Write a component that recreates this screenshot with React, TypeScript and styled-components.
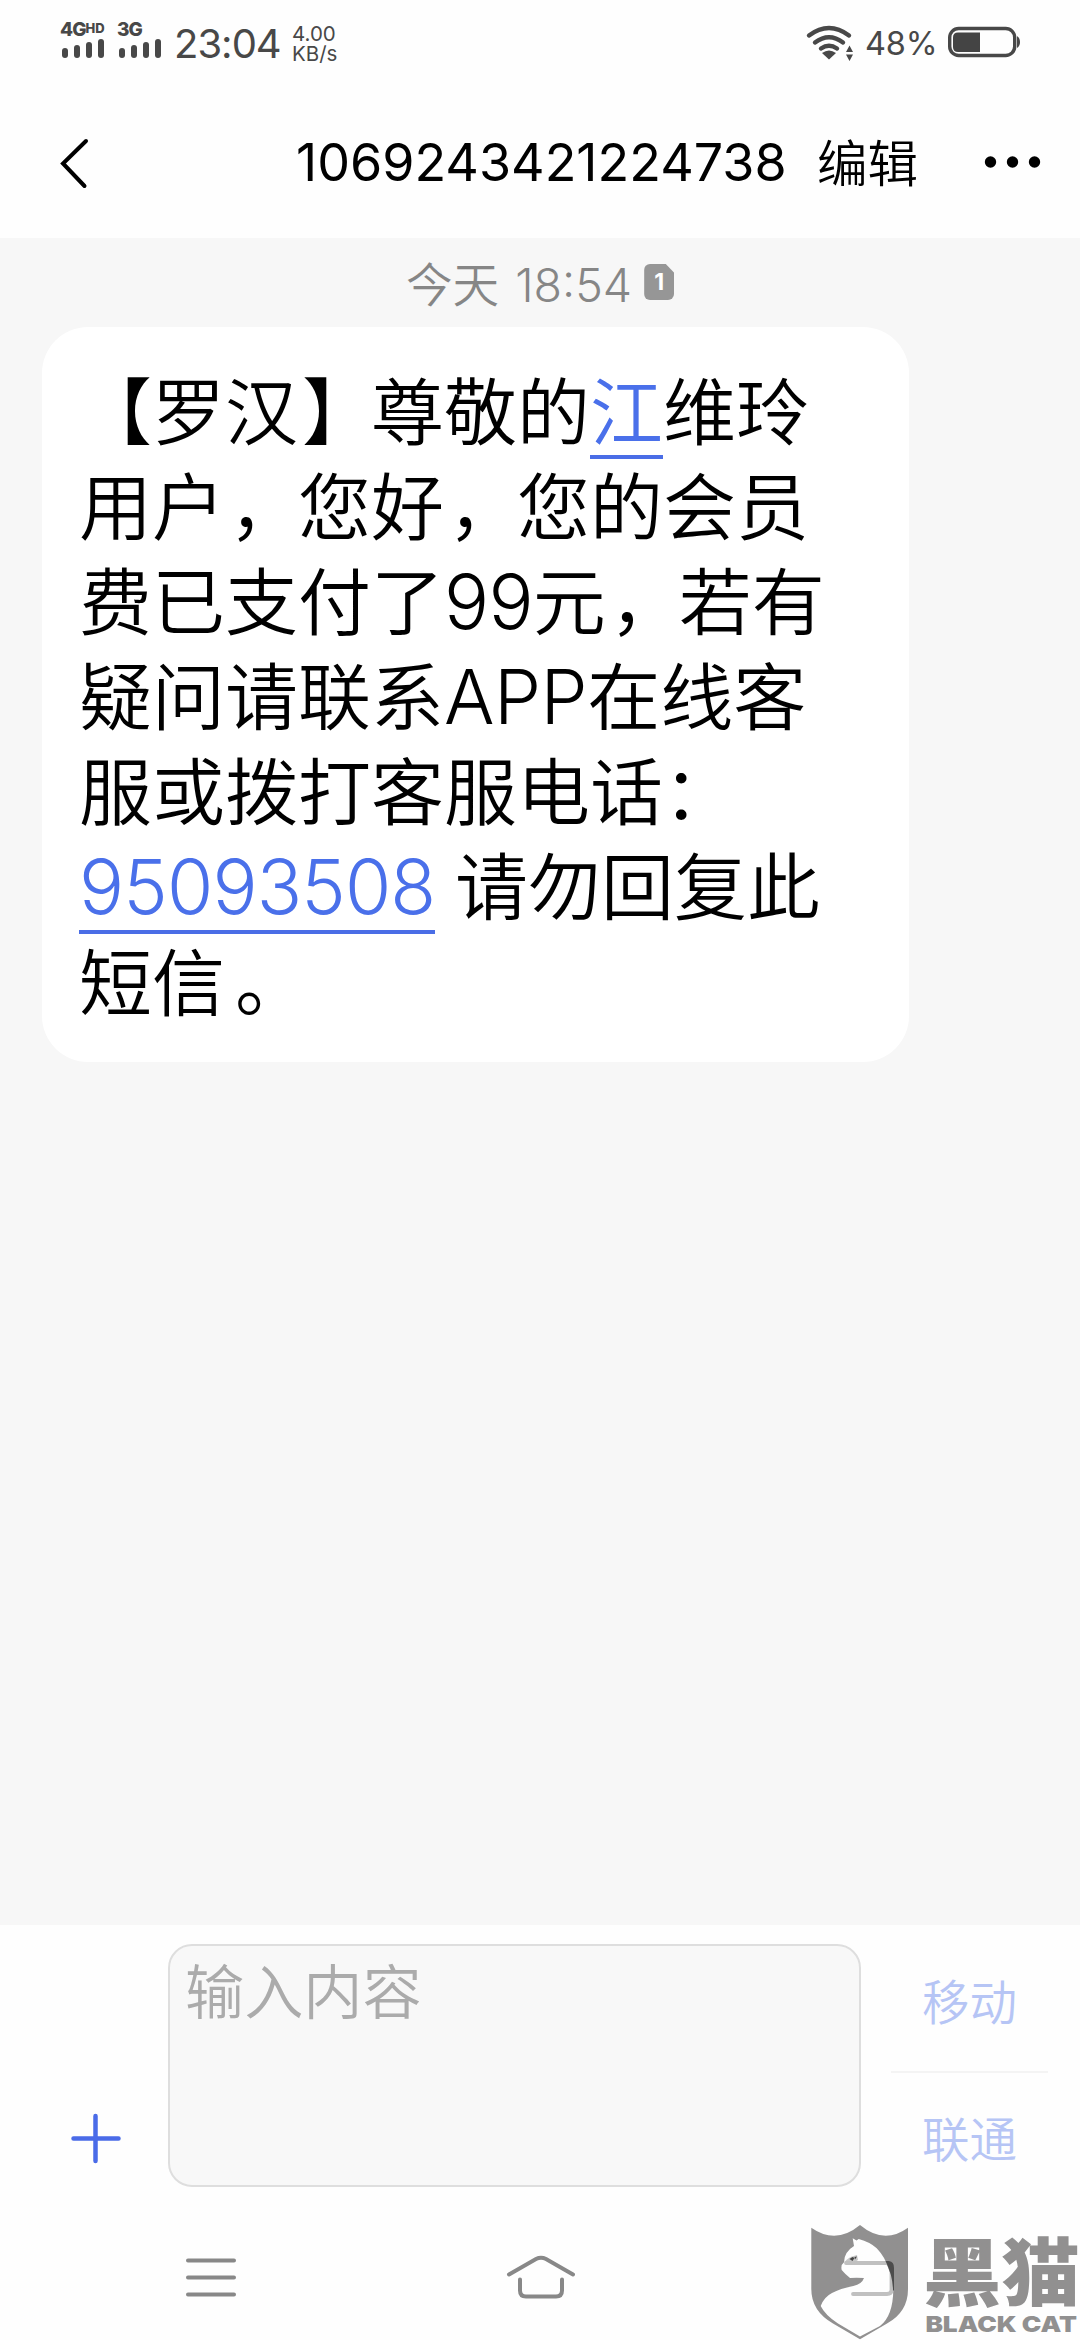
import React from "react";
import styled, { createGlobalStyle } from "styled-components";

const Global = createGlobalStyle`
  html, body { margin: 0; padding: 0; background: #fefefe; }
  * { box-sizing: border-box; }
`;

const Screen = styled.div`
  position: relative;
  width: 1080px;
  height: 2340px;
  overflow: hidden;
  display: flex;
  flex-direction: column;
  background: #fefefe;
  font-family: Inter, "Noto Sans CJK SC", sans-serif;
`;

const StatusBar = styled.div`
  height: 88px;
  flex: none;
  display: flex;
  justify-content: space-between;
  padding: 0 60px;
  color: #484848;
`;

const StatusGroup = styled.div`
  display: flex;
  align-items: center;
  height: 88px;
`;

const Signal = styled.div<{ $width: number }>`
  width: ${(p) => p.$width}px;
  height: 38px;
  margin-top: -10px;
  display: flex;
  flex-direction: column;
`;

const Network = styled.div`
  height: 19px;
  display: flex;
  font: 800 19px/20px Inter, sans-serif;
  letter-spacing: -0.9px;
`;

const Hd = styled.span`
  font-size: 13px;
  line-height: 16px;
  letter-spacing: 0;
`;

const Bars = styled.div`
  display: flex;
  align-items: flex-end;
  gap: 6px;
  height: 19px;
  padding-left: 2px;
`;

const Bar = styled.i<{ $h: number }>`
  width: 6px;
  height: ${(p) => p.$h}px;
  border-radius: 3px;
  background: #484848;
`;

const Clock = styled.div`
  width: 118px;
  font-size: 40px;
  line-height: 40px;
  letter-spacing: -1px;
`;

const Rate = styled.div`
  display: flex;
  flex-direction: column;
  font-size: 20.5px;
  line-height: 20px;
  margin-top: -1px;
`;

const Percent = styled.div`
  width: 83px;
  font-size: 32.5px;
  line-height: 40px;
  letter-spacing: -0.2px;
`;

const Header = styled.header`
  height: 150px;
  flex: none;
  display: flex;
  align-items: center;
  padding: 0 0 0 58px;
  color: #000;
`;

const Icon = styled.svg`
  display: block;
  flex: none;
  overflow: visible;
`;

const Title = styled.h1`
  margin: 0 0 0 204px;
  width: 521px;
  font-size: 52px;
  line-height: 60px;
  font-weight: 400;
  white-space: nowrap;
`;

const Edit = styled.div`
  width: 168px;
  padding-top: 2px;
  font-size: 50.5px;
  line-height: 60px;
  font-weight: 350;
`;

const Thread = styled.main`
  height: 1687px;
  flex: none;
  background: #f7f7f7;
  padding-left: 42px;
`;

const Stamp = styled.div`
  height: 89px;
  padding: 5px 0 0 364px;
  display: flex;
  align-items: center;
  color: #868686;
  font-size: 46.6px;
  line-height: 60px;
  font-weight: 350;
`;

const StampTime = styled.span`
  width: 129px;
  margin-left: 16px;
`;

const SimBadge = styled.span`
  display: flex;
  justify-content: center;
  width: 30px;
  height: 36px;
  margin-top: -6px;
  border-radius: 6px;
  background: #969696;
  clip-path: polygon(0 0, 72% 0, 100% 24%, 100% 100%, 0 100%);
  color: #fff;
  font: 700 23px/36px Inter, sans-serif;
`;

const Bubble = styled.section`
  width: 867px;
  height: 735px;
  border-radius: 46px;
  background: #fff;
  padding: 33px 0 0 37px;
`;

const Line = styled.div`
  height: 95.1px;
  line-height: 95px;
  font-size: 73px;
  font-weight: 350;
  color: #000;
  white-space: nowrap;
  font-family: "Noto Sans CJK SC", sans-serif;
`;

const Latin = styled.span<{ $track?: number }>`
  font-family: Inter, sans-serif;
  font-size: 75px;
  font-weight: 300;
  line-height: 1;
  letter-spacing: ${(p) => p.$track ?? 0}px;
`;

const Mark = styled.span<{ $shift: number }>`
  margin-left: ${(p) => p.$shift}px;
  margin-right: ${(p) => -p.$shift}px;
`;

const Link = styled.span`
  display: inline-block;
  height: 99px;
  margin-bottom: -4px;
  line-height: 95px;
  vertical-align: top;
  color: #4a70ea;
  border-bottom: 4px solid #4a6de6;
`;

const Composer = styled.footer`
  height: 285px;
  flex: none;
  display: flex;
  align-items: flex-start;
  padding: 19px 32px 0 71px;
`;

const Plus = styled.div`
  width: 97px;
  padding-top: 169px;
`;

const Input = styled.div`
  width: 693px;
  height: 243px;
  border: 2px solid #dedede;
  border-radius: 24px;
  background: #f8f8f8;
  padding: 7px 0 0 15px;
  color: #ababab;
  font-size: 59.2px;
  line-height: 80px;
  font-weight: 350;
`;

const Sims = styled.div`
  width: 157px;
  margin-left: 30px;
  display: flex;
  flex-direction: column;
`;

const Sim = styled.div<{ $top: number; $height: number }>`
  height: ${(p) => p.$height}px;
  padding-top: ${(p) => p.$top}px;
  text-align: center;
  font-size: 47.5px;
  line-height: 60px;
  font-weight: 350;
  color: #b6c5f5;
`;

const Rule = styled.div`
  height: 2px;
  background: #f4f4f4;
`;

const Nav = styled.nav`
  flex: 1;
  display: flex;
  padding: 45px 0 0 184px;
  gap: 268px;
`;

const Watermark = styled.aside`
  position: absolute;
  left: 810px;
  top: 2224px;
  display: flex;
  color: #919090;
`;

const Wordmark = styled.div`
  margin-left: 13px;
  width: 154px;
`;

const Brand = styled.div`
  height: 86px;
  font: 900 74px/88px "Noto Sans CJK SC", sans-serif;
  white-space: nowrap;
  transform-origin: left;
  transform: scaleX(1.06);
`;

const BrandLatin = styled.div`
  padding-left: 2px;
  font: 900 22px/28px Inter, sans-serif;
  white-space: nowrap;
  transform-origin: left;
  transform: scaleX(1.19);
`;

const bars = [10, 13, 16, 19];

export default function App() {
  return (
    <>
      <Global />
      <Screen>
        <StatusBar>
          <StatusGroup>
            <Signal $width={57}>
              <Network>4G<Hd>HD</Hd></Network>
              <Bars>{bars.map((h) => <Bar key={h} $h={h} />)}</Bars>
            </Signal>
            <Signal $width={57}>
              <Network>3G</Network>
              <Bars>{bars.map((h) => <Bar key={h} $h={h} />)}</Bars>
            </Signal>
            <Clock>23:04</Clock>
            <Rate><span>4.00</span><span>KB/s</span></Rate>
          </StatusGroup>
          <StatusGroup>
            <Icon width="59" height="36" viewBox="0 0 59 36" fill="none" stroke="#484848" strokeWidth="4.4" strokeLinecap="round">
              <path d="M3 9.5Q23 -5.500 43 9.500M9 16.500Q23 6 37 16.500M15 22.500Q23 17 31 22.500" />
              <path d="M16 27Q23 22 30 27L23 33.500Z" fill="#484848" stroke="none" />
              <path d="M40 26L43.500 19.500L47 26ZM40 28.500L43.500 35L47 28.500Z" fill="#484848" stroke="none" />
            </Icon>
            <Percent>48%</Percent>
            <Icon width="72" height="32" viewBox="0 0 72 32" fill="none">
              <rect x="1.700" y="0.500" width="65" height="27" rx="9" stroke="#484848" strokeWidth="3.400" />
              <path d="M10 4.500H32V24H10Q5 24 5 19V9.500Q5 4.500 10 4.500Z" fill="#444" />
              <path d="M69 8Q72 10 72 14T69 20Z" fill="#484848" />
            </Icon>
          </StatusGroup>
        </StatusBar>

        <Header>
          <Icon width="34" height="50" viewBox="0 0 34 50" fill="none" stroke="#000" strokeWidth="4" strokeLinecap="round">
            <path d="M28 3L5 25.500L26.500 48" />
          </Icon>
          <Title>1069243421224738</Title>
          <Edit>编辑</Edit>
          <Icon width="60" height="12" viewBox="0 0 60 12" fill="#000">
            <circle cx="5.500" cy="5" r="5.700" /><circle cx="27.500" cy="5" r="5.700" /><circle cx="49.500" cy="5" r="5.700" />
          </Icon>
        </Header>

        <Thread>
          <Stamp>今天<StampTime>18:54</StampTime><SimBadge>1</SimBadge></Stamp>
          <Bubble>
            <Line>【罗汉<Mark $shift={4}>】</Mark>尊敬的<Link>江</Link>维玲</Line>
            <Line>用户<Mark $shift={4}>，</Mark>您好<Mark $shift={4}>，</Mark>您的会员</Line>
            <Line>费已支付了<Latin $track={-0.7}>99</Latin>元<Mark $shift={4}>，</Mark>若有</Line>
            <Line>疑问请联系<Latin $track={-0.5}>APP</Latin>在线客</Line>
            <Line>服或拨打客服电话：</Line>
            <Line><Link><Latin $track={-0.85}>95093508</Latin></Link><Latin $track={-1.5}> </Latin>请勿回复此</Line>
            <Line>短信<Mark $shift={10}>。</Mark></Line>
          </Bubble>
        </Thread>

        <Composer>
          <Plus>
            <Icon width="50" height="50" viewBox="0 0 50 50" stroke="#4a6be8" strokeWidth="4.500" strokeLinecap="round">
              <path d="M24.500 3V48M2.500 25.500H47.500" />
            </Icon>
          </Plus>
          <Input>输入内容</Input>
          <Sims>
            <Sim $top={29} $height={127}>移动</Sim>
            <Rule />
            <Sim $top={37} $height={110}>联通</Sim>
          </Sims>
        </Composer>

        <Nav>
          <Icon width="54" height="46" viewBox="0 0 54 46" stroke="#888" strokeWidth="4" strokeLinecap="round">
            <path d="M4 5.500H50M4 22.500H50M4 39.500H50" />
          </Icon>
          <Icon width="70" height="46" viewBox="0 0 70 46" fill="none" stroke="#888" strokeWidth="4" strokeLinecap="round">
            <path d="M3 19.500L30 4Q35 1.500 40 4L67 19.500M14 24.500V35.500Q14 41.500 20 41.500H50Q56 41.500 56 35.500V24.500" />
          </Icon>
        </Nav>

        <Watermark>
          <Icon width="100" height="116" viewBox="0 0 100 116">
            <path d="M1.300 3.700Q26 21 50 1Q74 21 98 3.700V65Q98 88 77 99.500L50 115.300L23 99.500Q1.300 87 1.300 65Z" fill="#919090" />
            <path d="M42.700 14.300L46.500 16.500L48.700 15Q60 18 66.700 24.300Q75 33 78.300 44.300Q83.500 56 83.300 66Q83 92 70 102L50 112.500L28 99.500Q15 91 10.700 82Q14 73 22 69Q30 64.500 43.300 62Q52 60 54 54Q46 53.500 40 54Q35 50 31.700 46Q30.500 41 34 38.300Q34 28 44 22Z" fill="#fefefe" />
            <path d="M34.500 38Q38 33 47 31L48 36L45 38Z" fill="#c8c8c8" />
            <path d="M39.500 35L42.500 37L44.500 34L42.500 33ZM45 35.500L47 32.500L44.500 33Z" fill="#444" />
            <path d="M36 39H76Q81.500 39 81.500 46V66Q81.500 70 77 70H43" fill="none" stroke="#c0c0c0" strokeWidth="3.800" strokeLinecap="round" />
            <path d="M75.500 37H79Q84 37.500 84 44V66L83 67Q83 52 75.500 37Z" fill="#4c4c4c" />
          </Icon>
          <Wordmark>
            <Brand>黑猫</Brand>
            <BrandLatin>BLACK CAT</BrandLatin>
          </Wordmark>
        </Watermark>
      </Screen>
    </>
  );
}
